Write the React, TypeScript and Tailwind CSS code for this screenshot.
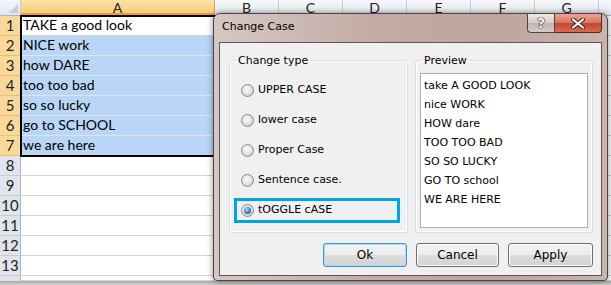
import React from "react";

const CELLS = [
  "TAKE a good look",
  "NICE work",
  "how DARE",
  "too too bad",
  "so so lucky",
  "go to SCHOOL",
  "we are here",
];

const PREVIEW = [
  "take A GOOD LOOK",
  "nice WORK",
  "HOW dare",
  "TOO TOO BAD",
  "SO SO LUCKY",
  "GO TO school",
  "WE ARE HERE",
];

const OPTIONS = ["UPPER CASE", "lower case", "Proper Case", "Sentence case.", "tOGGLE cASE"];

const COLS = ["B", "C", "D", "E", "F", "G"];

const Radio = ({ checked }: { checked: boolean }) => (
  <span className="flex h-[13px] w-[13px] shrink-0 items-center justify-center rounded-full border border-[#8a8a8a] bg-[radial-gradient(circle_at_45%_40%,#fbfbfb_0%,#e6e6e6_45%,#bdbdbd_100%)]">
    {checked && (
      <span className="h-[7px] w-[7px] rounded-full bg-[radial-gradient(circle_at_40%_35%,#a9dcf8_0%,#2f7fc4_55%,#163f6e_100%)]" />
    )}
  </span>
);

const Button = ({ label, width, primary }: { label: string; width: string; primary?: boolean }) => (
  <div
    className={`${width} flex h-[24px] items-center justify-center rounded-[3px] border bg-[linear-gradient(#f3f3f3_0%,#ececec_50%,#dedede_50%,#d2d2d2_100%)] text-[12px] text-black ${
      primary
        ? "border-[#3c8fd0] shadow-[inset_0_0_0_1px_#a8e0fa]"
        : "border-[#707070] shadow-[inset_0_0_0_1px_#fbfbfb]"
    }`}
  >
    {label}
  </div>
);

const Sheet = () => {
  const rowNums = Array.from({ length: 14 }, (_, i) => i + 1);
  return (
    <div className="flex h-[281px] flex-col overflow-hidden bg-white font-['Lato',sans-serif] text-[#222]">
      {/* column headers */}
      <div className="flex h-[16px] shrink-0 border-b border-[#9eb6ce]">
        <div className="relative w-[21px] shrink-0 border-r border-[#c4ccd6] bg-[linear-gradient(#f4f6f9,#e3e7ed)]">
          <div className="absolute bottom-[2px] right-[2px] h-0 w-0 border-b-[9px] border-l-[9px] border-b-[#c9ced6] border-l-transparent" />
        </div>
        <div className="flex w-[194px] shrink-0 items-center justify-center border-r border-[#e2a449] bg-[linear-gradient(#fbe2a8,#f6ca6f)] text-[14px] leading-none shadow-[inset_0_-2px_0_#f29b37]">
          A
        </div>
        {COLS.map((c) => (
          <div
            key={c}
            className="flex w-[64px] shrink-0 items-center justify-center border-r border-[#c4ccd6] bg-[linear-gradient(#f6f8fa,#e4e8ee)] text-[14px] leading-none"
          >
            {c}
          </div>
        ))}
        <div className="flex-1 bg-[linear-gradient(#f6f8fa,#e4e8ee)]" />
      </div>

      {/* rows */}
      {rowNums.map((n) => {
        const sel = n <= 7;
        const last = n === 14;
        return (
          <div key={n} className={`flex shrink-0 overflow-hidden ${last ? "h-[5px]" : "h-[20px]"}`}>
            <div
              className={`flex w-[21px] shrink-0 items-center justify-center border-r text-[15px] leading-none ${
                last ? "" : "border-b"
              } ${
                sel
                  ? "border-b-[#e8c071] border-r-[#e2a449] bg-[#f9d99a]"
                  : "border-b-[#c4ccd6] border-r-[#9eb6ce] bg-[#e1e5eb]"
              }`}
            >
              {last ? "" : n}
            </div>
            <div
              className={`flex w-[194px] shrink-0 items-end border-b border-r pb-[1px] pl-[2px] text-[14px] leading-[18px] text-black ${
                sel && n > 1 ? "border-[#d7e5f4] bg-[#b9d6f6]" : "border-[#d4d4d4] bg-white"
              }`}
            >
              {CELLS[n - 1] ?? ""}
            </div>
            {COLS.map((c) => (
              <div key={c} className="w-[64px] shrink-0 border-b border-r border-[#d4d4d4]" />
            ))}
            <div className="flex-1 border-b border-[#d4d4d4]" />
          </div>
        );
      })}
    </div>
  );
};

const Dialog = () => (
  <div className="absolute left-[213px] top-[13px] flex h-[268px] w-[395px] flex-col rounded-t-[7px] rounded-b-[4px] border border-[#4d4442] bg-[linear-gradient(90deg,#d6c7c3_0%,#c4aca6_40%,#bea49e_70%,#c9b4af_100%)] font-['DejaVu_Sans',sans-serif] shadow-[0_0_6px_rgba(0,0,0,0.45)]">
    {/* title bar */}
    <div className="relative flex h-[28px] shrink-0 items-center pl-[8px] text-[11px] text-black">
      <span className="pb-[1px]">Change Case</span>
      <div className="absolute right-[5px] top-0 flex">
        <div className="flex h-[19px] w-[28px] items-center justify-center rounded-bl-[4px] border border-t-0 border-[#4e4442] bg-[linear-gradient(#efe6e4_0%,#d7cac7_50%,#c3b3b0_50%,#d6c9c6_100%)] text-[14px] font-bold leading-none text-[#f4f4f4] [text-shadow:0_0_1px_#222,0_0_1px_#222,0_0_1px_#222]">
          ?
        </div>
        <div className="flex h-[19px] w-[47px] items-center justify-center rounded-br-[4px] border border-l-0 border-t-0 border-[#4e2a22] bg-[linear-gradient(#e9a595_0%,#d8735f_50%,#c6442b_50%,#d66c4f_100%)]">
          <svg width="14" height="11" viewBox="0 0 14 11">
            <path d="M2 1.5 L12 9.5 M12 1.5 L2 9.5" stroke="#3a2320" strokeWidth="4" strokeLinecap="round" />
            <path d="M2 1.5 L12 9.5 M12 1.5 L2 9.5" stroke="#ffffff" strokeWidth="2.2" strokeLinecap="round" />
          </svg>
        </div>
      </div>
    </div>

    {/* client area */}
    <div className="mx-[5px] mb-[4px] flex flex-1 flex-col border border-[#5f5755] bg-[#f0f0f0] text-[11px] text-black">
      <div className="flex gap-[7px] pl-[9px] pr-[8px] pt-[11px]">
        <fieldset className="h-[179px] w-[179px] rounded-[3px] border border-[#d5dfe5] shadow-[inset_0_0_0_1px_#ffffff]">
          <legend className="ml-[6px] px-[2px] leading-[13px]">Change type</legend>
          <div className="flex flex-col gap-[5px] pt-[11px]">
            {OPTIONS.map((o, i) => {
              const on = i === OPTIONS.length - 1;
              return (
                <div
                  key={o}
                  className={`ml-[4px] flex h-[25px] w-[166px] items-center gap-[4px] border-[3px] px-[4px] ${
                    on ? "border-[#00a2e8]" : "border-transparent"
                  }`}
                >
                  <Radio checked={on} />
                  <span>{o}</span>
                </div>
              );
            })}
          </div>
        </fieldset>

        <fieldset className="h-[179px] w-[178px] rounded-[3px] border border-[#d5dfe5] shadow-[inset_0_0_0_1px_#ffffff]">
          <legend className="ml-[6px] px-[2px] leading-[13px]">Preview</legend>
          <div className="ml-[4px] mt-[6px] h-[155px] w-[168px] border border-[#abadb3] bg-white pl-[3px] pt-[2px]">
            {PREVIEW.map((p) => (
              <div key={p} className="leading-[19px]">
                {p}
              </div>
            ))}
          </div>
        </fieldset>
      </div>

      <div className="mt-[10px] flex justify-end gap-[9px] pr-[8px]">
        <Button label="Ok" width="w-[84px]" primary />
        <Button label="Cancel" width="w-[83px]" />
        <Button label="Apply" width="w-[85px]" />
      </div>
    </div>
  </div>
);

export default function App() {
  return (
    <div className="relative h-[285px] w-[611px] overflow-hidden bg-white">
      <Sheet />
      {/* selection outline */}
      <div className="pointer-events-none absolute left-[20px] top-[15px] h-[142px] w-[196px] border-2 border-black" />
      <div className="h-[4px] bg-[linear-gradient(#a9a9a9,#d0d0d0)]" />
      <Dialog />
    </div>
  );
}
